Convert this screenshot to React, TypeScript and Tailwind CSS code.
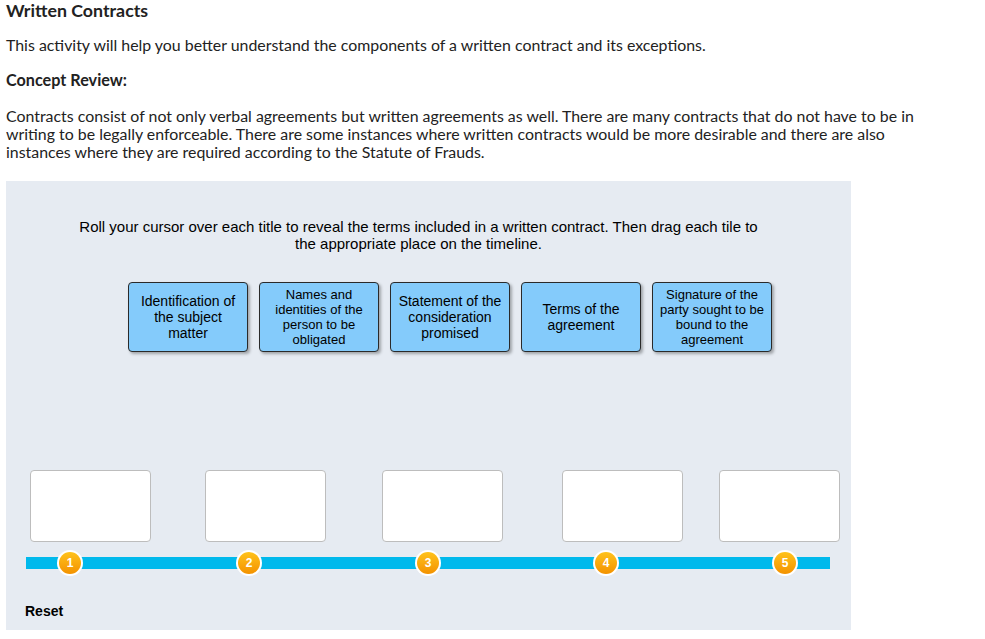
import React from "react";

const tiles = [
  { text: "Identification of the subject matter", small: false },
  { text: "Names and identities of the person to be obligated", small: true },
  { text: "Statement of the consideration promised", small: false },
  { text: "Terms of the agreement", small: false },
  { text: "Signature of the party sought to be bound to the agreement", small: true },
];

// left margin of each drop box (from previous box / panel edge)
const slots = ["ml-[24px]", "ml-[54px]", "ml-[56px]", "ml-[59px]", "ml-[36px]"];

// center of each marker, from the bar's left edge
const markers = [44, 223, 402, 580, 759];

function Marker({ n, left }: { n: number; left: number }) {
  return (
    <div
      className="absolute top-[-7px] w-[26px] h-[26px] rounded-full bg-white flex items-center justify-center"
      style={{ left: left - 13 }}
    >
      <div className="w-[22px] h-[22px] rounded-full bg-gradient-to-b from-[#ffc21a] to-[#f39200] flex items-center justify-center text-white text-[12px] font-bold font-['Liberation_Sans',Arial,sans-serif]">
        {n}
      </div>
    </div>
  );
}

export default function App() {
  return (
    <div className="w-[985px] h-[639px] bg-white text-[#222] font-['Lato','Open_Sans',sans-serif] overflow-hidden">
      <div className="px-[6px]">
        <h1 className="text-[17.8px] leading-[20px] font-bold">Written Contracts</h1>
        <p className="mt-[16px] text-[15.9px] leading-[18px]">
          This activity will help you better understand the components of a written contract and its exceptions.
        </p>
        <h2 className="mt-[17px] text-[16.2px] leading-[18px] font-bold">Concept Review:</h2>
        <p className="mt-[18px] text-[15.9px] leading-[18px] max-w-[925px]">
          Contracts consist of not only verbal agreements but written agreements as well. There are many contracts that do not have to be in writing to be legally enforceable. There are some instances where written contracts would be more desirable and there are also instances where they are required according to the Statute of Frauds.
        </p>

        {/* activity panel */}
        <div className="mt-[20px] w-[845px] h-[449px] bg-[#e6ebf2] flex flex-col font-['Liberation_Sans',Arial,sans-serif] text-black">
          <p className="mt-[37px] ml-[70px] w-[685px] text-center text-[15px] leading-[17px]">
            Roll your cursor over each title to reveal the terms included in a written contract. Then drag each tile to the appropriate place on the timeline.
          </p>

          <div className="mt-[30px] ml-[122px] flex gap-[11px]">
            {tiles.map((t) => (
              <div
                key={t.text}
                className={`w-[120px] h-[70px] px-[6px] rounded-[4px] border border-[#2a2a2a] bg-[#84cbfb] shadow-[2px_2px_3px_rgba(0,0,0,0.3)] flex items-center justify-center text-center ${
                  t.small ? "text-[13px] leading-[15px]" : "text-[14px] leading-[16px]"
                }`}
              >
                {t.text}
              </div>
            ))}
          </div>

          <div className="mt-[118px] flex">
            {slots.map((m, i) => (
              <div
                key={i}
                className={`${m} w-[121px] h-[72px] rounded-[4px] border border-[#bdbdbd] bg-white`}
              />
            ))}
          </div>

          <div className="mt-[15px] ml-[20px] w-[804px] h-[12px] bg-[#00b9ec] relative">
            {markers.map((l, i) => (
              <Marker key={i} n={i + 1} left={l} />
            ))}
          </div>

          <div className="mt-[34px] ml-[19px] text-[14px] leading-[16px] font-bold">Reset</div>
        </div>
      </div>
    </div>
  );
}
